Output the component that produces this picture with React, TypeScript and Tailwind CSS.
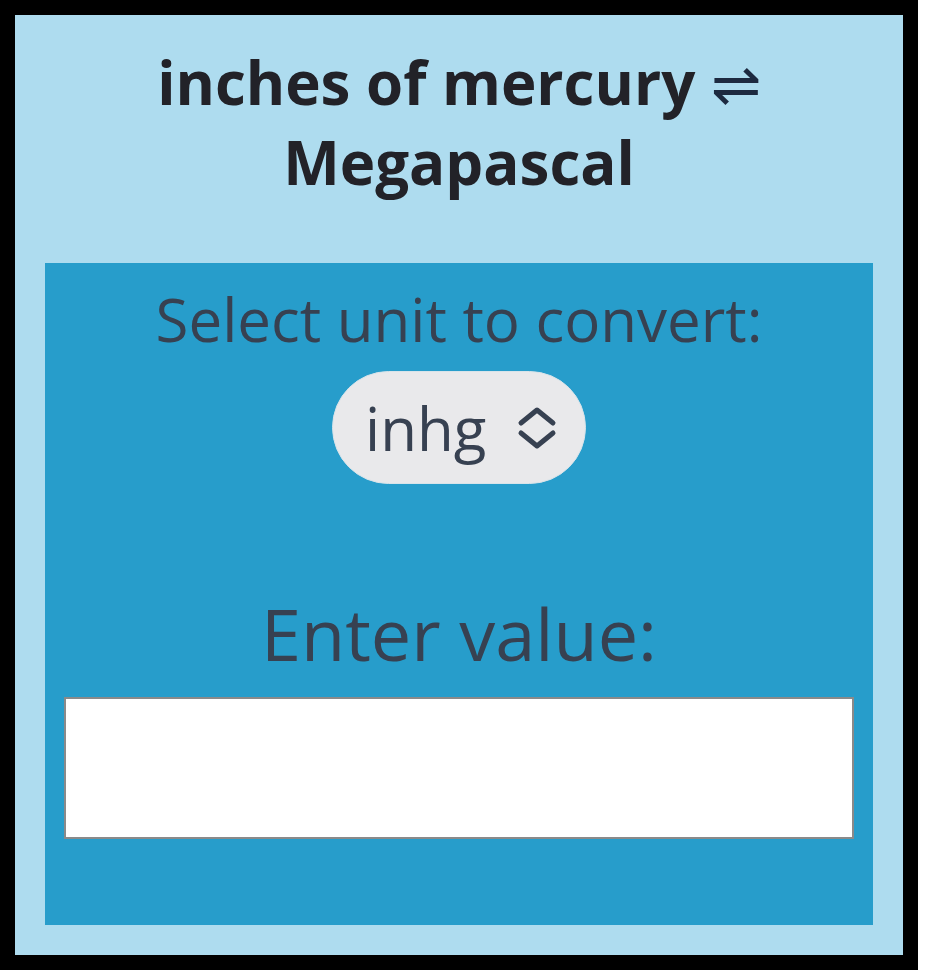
import { useState } from "react";

const App = () => {
  const [unit, setUnit] = useState("inhg");
  const [value, setValue] = useState("");

  return (
    <div className="w-[918px] h-[970px] border-[15px] border-black bg-[#aedcef] flex flex-col font-['Open_Sans',sans-serif]">
      <h1 className="text-[60px] leading-[78px] font-bold text-[#222228] text-center pt-[28px] px-6">
        inches of mercury{" "}
        <span className="font-['DejaVu_Sans',sans-serif] font-extralight text-[#1d2a40]">⇌</span>{" "}
        Megapascal
      </h1>
      <div className="mx-[30px] mt-[62px] mb-[30px] flex-1 bg-[#279dcb] flex flex-col items-center">
        <label className="text-[60px] leading-[68px] text-[#374151] mt-[22px]">
          Select unit to convert:
        </label>
        <div className="mt-[18px] h-[113px] w-[254px] rounded-full bg-[#e9e9eb] border border-[#d8e4ea] flex items-center justify-center gap-[26px] pl-1">
          <select
            value={unit}
            onChange={(e) => setUnit(e.target.value)}
            className="appearance-none bg-transparent text-[60px] text-[#374151] outline-none"
          >
            <option value="inhg">inhg</option>
            <option value="mpa">mpa</option>
          </select>
          <svg width="40" height="44" viewBox="0 0 40 44" fill="none" stroke="#374151" strokeWidth="5" strokeLinecap="round" strokeLinejoin="round">
            <path d="M4 17 L20 4 L36 17" />
            <path d="M4 27 L20 40 L36 27" />
          </svg>
        </div>
        <label className="text-[72px] leading-[84px] text-[#374151] mt-[107px]">
          Enter value:
        </label>
        <input
          type="text"
          value={value}
          onChange={(e) => setValue(e.target.value)}
          className="mt-[22px] w-[790px] h-[142px] bg-white border-2 border-[#8a8a8a] outline-none"
        />
      </div>
    </div>
  );
};

export default App;
